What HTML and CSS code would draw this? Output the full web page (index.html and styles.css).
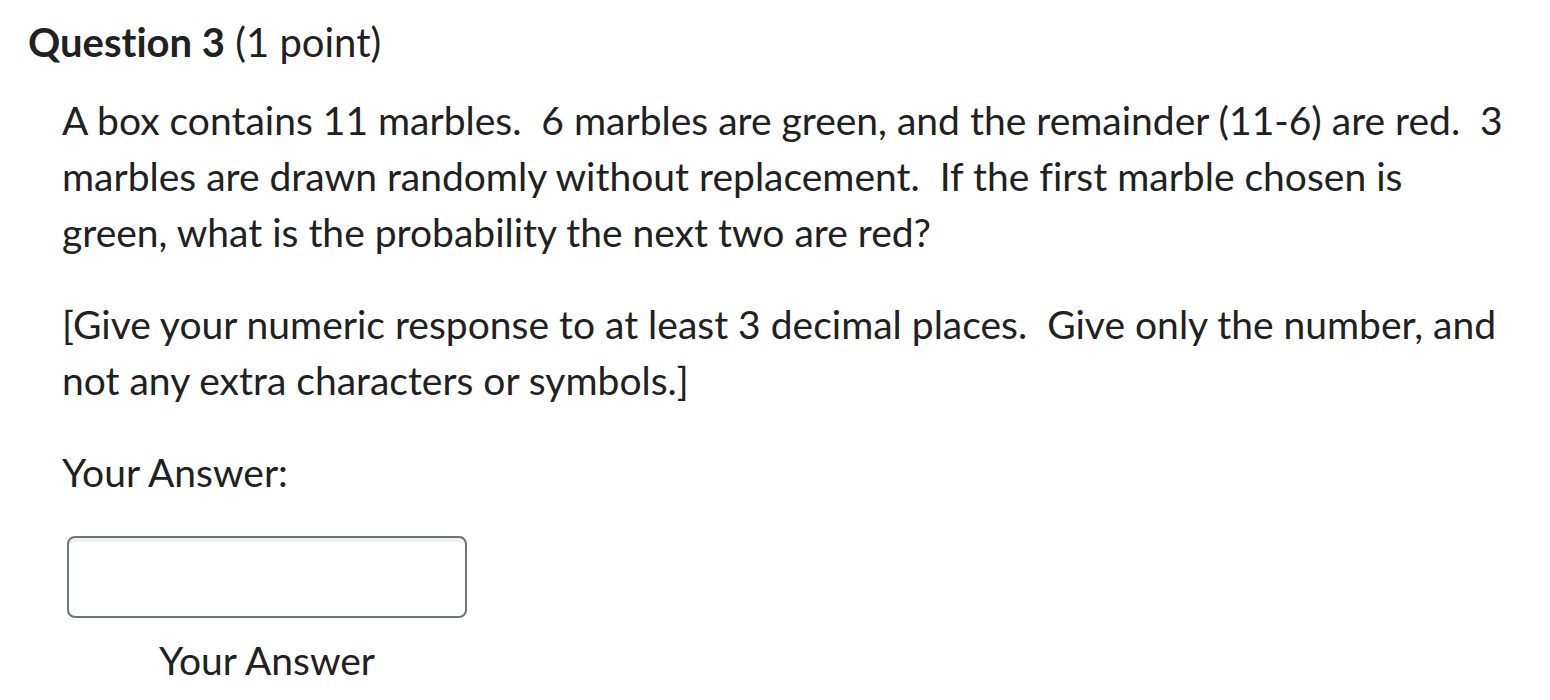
FILE: index.html
```html
<!DOCTYPE html>
<html>
<head>
<meta charset="utf-8">
<link rel="stylesheet" href="styles.css">
</head>
<body>
<div class="question">
  <h2 class="q-title"><span class="q-num">Question 3</span> (1 point)</h2>
  <div class="q-body">
    <p class="para">A box contains 11 marbles.&nbsp; 6 marbles are green, and the remainder (11-6) are red.&nbsp; 3 marbles are drawn randomly without replacement.&nbsp; If the first marble chosen is green, what is the probability the next two are red?</p>
    <p class="para">[Give your numeric response to at least 3 decimal places.&nbsp; Give only the number, and not any extra characters or symbols.]</p>
    <p class="para answer-label">Your Answer:</p>
    <div class="answer-field">
      <input class="answer-input" type="text" aria-label="Your Answer">
      <div class="answer-caption">Your Answer</div>
    </div>
  </div>
</div>
</body>
</html>
```
FILE: styles.css
```css
html, body {
  margin: 0;
  padding: 0;
  background: #ffffff;
}
body {
  font-family: Lato, "Noto Sans", sans-serif;
  color: #202122;
  font-variant-ligatures: none;
}
.question {
  padding: 18px 0 0 28px;
}
.q-title {
  margin: 0;
  font-size: 40px;
  line-height: 48px;
  font-weight: 400;
}
.q-num {
  font-weight: 700;
}
.q-body {
  padding-left: 34px;
  padding-top: 26px;
  width: 1445px;
}
.para {
  margin: 0 0 36px 0;
  font-size: 39px;
  line-height: 56px;
}
.answer-field {
  display: flex;
  flex-direction: column;
  align-items: center;
  width: 400px;
  margin-left: 5px;
}
.answer-input {
  box-sizing: border-box;
  width: 400px;
  height: 82px;
  border: 2px solid #6f7478;
  border-radius: 8px;
  box-shadow: inset 0 4px 0 #eef0f2;
  background: #fff;
  margin: 0;
}
.answer-caption {
  font-size: 39px;
  line-height: 56px;
  margin-top: 14px;
}
```
